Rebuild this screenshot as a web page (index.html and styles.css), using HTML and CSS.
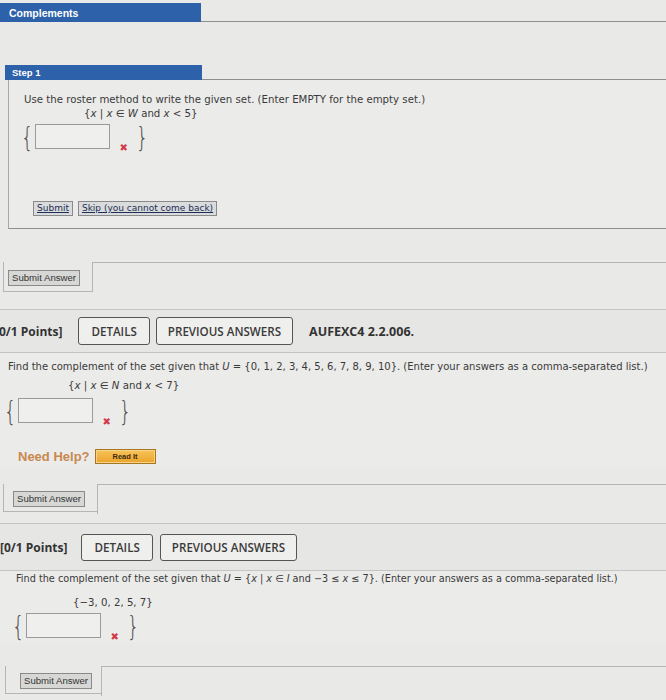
FILE: index.html
```html
<!DOCTYPE html>
<html>
<head>
<meta charset="utf-8">
<link rel="stylesheet" href="styles.css">
</head>
<body>
<div class="page">
  <div class="section-head">
    <div class="blue-tab main-tab">Complements</div>
    <div class="head-rule"></div>
  </div>

  <div class="step">
    <div class="section-head step-head">
      <div class="blue-tab step-tab">Step 1</div>
      <div class="head-rule"></div>
    </div>
    <div class="step-body">
      <p class="prompt">Use the roster method to write the given set. (Enter EMPTY for the empty set.)</p>
      <p class="set">{<i>x</i> | <i>x</i> ∈ <i>W</i> and <i>x</i> &lt; 5}</p>
      <div class="answer">
        <span class="brace">{</span>
        <span class="box"></span>
        <span class="cross">✖</span>
        <span class="brace">}</span>
      </div>
      <div class="step-buttons">
        <button class="plain-btn">Submit</button>
        <button class="plain-btn">Skip (you cannot come back)</button>
      </div>
    </div>
  </div>

  <div class="footer footer-first">
    <div class="footer-cell"><button class="submit-btn">Submit Answer</button></div>
    <div class="footer-rest"></div>
  </div>

  <div class="question q1">
    <div class="q-head">
      <span class="points cut">[0/1 Points]</span>
      <button class="outline-btn">DETAILS</button>
      <button class="outline-btn">PREVIOUS ANSWERS</button>
      <span class="code">AUFEXC4 2.2.006.</span>
    </div>
    <div class="q-body">
      <p class="prompt">Find the complement of the set given that <i>U</i> = {0, 1, 2, 3, 4, 5, 6, 7, 8, 9, 10}. (Enter your answers as a comma-separated list.)</p>
      <p class="set">{<i>x</i> | <i>x</i> ∈ <i>N</i> and <i>x</i> &lt; 7}</p>
      <div class="answer">
        <span class="brace">{</span>
        <span class="box"></span>
        <span class="cross">✖</span>
        <span class="brace">}</span>
      </div>
      <div class="help">
        <span class="help-label">Need Help?</span>
        <button class="read-btn">Read It</button>
      </div>
    </div>
    <div class="footer footer-q1">
      <div class="footer-cell"><button class="submit-btn">Submit Answer</button></div>
      <div class="footer-rest"></div>
    </div>
  </div>

  <div class="question q2">
    <div class="q-head">
      <span class="points">[0/1 Points]</span>
      <button class="outline-btn">DETAILS</button>
      <button class="outline-btn">PREVIOUS ANSWERS</button>
    </div>
    <div class="q-body">
      <p class="prompt">Find the complement of the set given that <i>U</i> = {<i>x</i> | <i>x</i> ∈ <i>I</i> and −3 ≤ <i>x</i> ≤ 7}. (Enter your answers as a comma-separated list.)</p>
      <p class="set">{−3, 0, 2, 5, 7}</p>
      <div class="answer">
        <span class="brace">{</span>
        <span class="box"></span>
        <span class="cross">✖</span>
        <span class="brace">}</span>
      </div>
    </div>
    <div class="footer footer-q2">
      <div class="footer-cell"><button class="submit-btn">Submit Answer</button></div>
      <div class="footer-rest"></div>
    </div>
  </div>
</div>
</body>
</html>
```

FILE: styles.css
```css
html, body {
  margin: 0;
  padding: 0;
}
body {
  background: #e9e9e7;
  width: 666px;
  height: 700px;
  overflow: hidden;
  font-family: "DejaVu Sans", Verdana, sans-serif;
  color: #3a3a3a;
}
.page {
  padding-top: 3px;
}
p { margin: 0; }
button { font-family: inherit; cursor: default; }

.section-head {
  display: flex;
  align-items: stretch;
}
.blue-tab {
  background: #2d61a9;
  color: #fff;
  font-family: "Liberation Sans", Arial, sans-serif;
  font-weight: bold;
  display: flex;
  align-items: center;
}
.main-tab {
  width: 192px;
  height: 19px;
  padding-left: 9px;
  font-size: 10.5px;
}
.head-rule {
  flex: 1;
  border-bottom: 1px solid #8e8e8e;
}

.step {
  margin-top: 43px;
}
.step-head {
  margin-left: 5px;
}
.step-tab {
  width: 190px;
  height: 15px;
  padding-left: 7px;
  font-size: 9.5px;
}
.step-body {
  margin-left: 8px;
  height: 149px;
  border-left: 1px solid #a8a8a8;
  border-bottom: 1px solid #8e8e8e;
  padding: 13px 0 0 15px;
  box-sizing: border-box;
  background: #ebebe9;
}
.prompt {
  font-size: 10.2px;
  line-height: 14px;
  white-space: nowrap;
}
.set {
  font-size: 10.2px;
  line-height: 13px;
  padding-left: 60px;
}
.answer {
  display: flex;
  align-items: flex-start;
  margin-top: 4px;
  margin-left: -1px;
  height: 30px;
}
.brace {
  font-family: "DejaVu Sans", sans-serif;
  font-weight: 200;
  font-size: 26px;
  line-height: 26px;
  color: #4a4a4a;
  transform: scaleX(0.75);
  margin: 0 -2px 0 -4px;
}
.box {
  width: 75px;
  height: 25px;
  border: 1px solid #9a9a9a;
  background: #efefed;
  box-sizing: border-box;
  margin-left: 1px;
}
.cross {
  color: #d23b4b;
  font-size: 10px;
  align-self: flex-start;
  margin: 18px 10px 0 10px;
  line-height: 12px;
}
.step-buttons {
  display: flex;
  gap: 5px;
  margin-top: 47px;
  margin-left: 9px;
}
.plain-btn {
  font-size: 9px;
  height: 15px;
  padding: 0 3px;
  border: 1px solid #8a8a8a;
  background: #d9dbdc;
  color: #1e2f55;
  text-decoration: underline;
  line-height: 13px;
}

.footer {
  display: flex;
  height: 30px;
}
.footer-cell {
  border-left: 1px solid #b5b5b5;
  border-bottom: 1px solid #b5b5b5;
  display: flex;
  align-items: center;
  padding-left: 5px;
  box-sizing: border-box;
}
.footer-rest {
  flex: 1;
  border-top: 1px solid #b5b5b5;
  border-left: 1px solid #b5b5b5;
}
.footer-first {
  margin-top: 33px;
  margin-left: 3px;
}
.footer-first .footer-cell { width: 89px; padding-left: 4px; padding-top: 2px; }
.submit-btn {
  font-family: "Liberation Sans", Arial, sans-serif;
  font-size: 9.6px;
  height: 16px;
  padding: 0 3px;
  border: 1px solid #8a8a8a;
  background: #d7d8d6;
  color: #333;
  line-height: 14px;
}

.question {
  border-top: 1px solid #c4c4c4;
}
.q1 { margin-top: 17px; }
.q-head {
  display: flex;
  align-items: center;
  height: 42px;
  border-bottom: 1px solid #c4c4c4;
  background: #e6e6e4;
  font-family: "Open Sans", "DejaVu Sans", sans-serif;
}
.points {
  font-weight: bold;
  font-size: 12px;
  color: #333;
}
.cut { margin-left: -5px; }
.outline-btn {
  font-family: "Open Sans", sans-serif;
  font-size: 11.6px;
  font-weight: 600;
  color: #3a3a3a;
  background: #efefed;
  border: 1.5px solid #555;
  border-radius: 3px;
  height: 28px;
  padding: 0 12px;
}
.q1 .points { margin-right: 16px; }
.q1 .outline-btn + .outline-btn { margin-left: 6px; padding: 0 11px; }
.code {
  font-weight: bold;
  font-size: 12.5px;
  margin-left: 16px;
  color: #333;
}
.q-body {
  background: #ebebe9;
}
.q1 .q-body {
  padding: 7px 0 0 8px;
}
.q1 .prompt { font-size: 10px; }
.q1 .set { padding-left: 60px; margin-top: 5px; }
.q1 .answer { margin-top: 6px; margin-left: -2px; }
.help {
  display: flex;
  align-items: center;
  gap: 5px;
  margin: 17px 0 0 10px;
  height: 22px;
}
.help-label {
  font-family: "Liberation Sans", Arial, sans-serif;
  font-weight: bold;
  font-size: 13px;
  color: #c8884e;
}
.read-btn {
  width: 61px;
  height: 15px;
  border: 1px solid #a87520;
  background: linear-gradient(#f8c35a, #eba32a);
  font-family: "Liberation Sans", Arial, sans-serif;
  font-weight: bold;
  font-size: 7.5px;
  color: #3a2a10;
  padding: 0;
  box-shadow: inset 0 0 0 1px #f6d48a;
}
.footer-q1 {
  margin-top: 17px;
  margin-left: 3px;
  margin-bottom: 9px;
}
.footer-q1 .footer-cell { width: 94px; padding-left: 9px; height: 28px; padding-top: 3px; }

.q2 .q-head { height: 46px; }
.q2 .points { margin-right: 14px; }
.q2 .outline-btn { height: 27px; padding: 0 12px; }
.q2 .outline-btn + .outline-btn { margin-left: 7px; padding: 0 11px; }
.q2 .q-body { padding: 1px 0 0 16px; }
.q2 .prompt { font-size: 9.7px; }
.q2 .set { padding-left: 57px; margin-top: 10px; }
.q2 .answer { margin-top: 4px; margin-left: -2px; }
.footer-q2 {
  margin-top: 23px;
  margin-left: 5px;
}
.footer-q2 .footer-cell { width: 96px; padding-left: 14px; height: 28px; padding-top: 2px; }
```
